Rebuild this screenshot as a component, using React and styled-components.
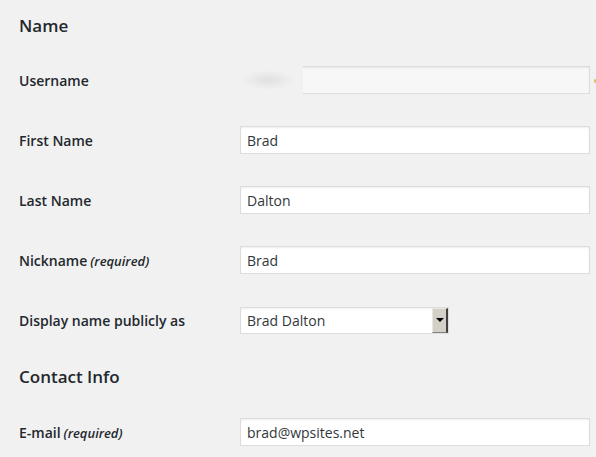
import React from 'react';
import styled, { createGlobalStyle } from 'styled-components';

const GlobalStyle = createGlobalStyle`
  html, body {
    margin: 0;
    padding: 0;
    background: #f1f1f1;
  }
  body {
    font-family: "Open Sans", "Liberation Sans", sans-serif;
    color: #23282d;
    font-size: 14px;
  }
`;

const Page = styled.div`
  width: 596px;
  height: 457px;
  overflow: hidden;
  padding-left: 19px;
  box-sizing: border-box;
`;

const Heading = styled.h2`
  margin: 0;
  height: ${p => p.h}px;
  display: flex;
  align-items: center;
  font-size: 17px;
  font-weight: 600;
  color: #23282d;
`;

const Row = styled.div`
  display: grid;
  grid-template-columns: 221px 350px;
  align-items: center;
  height: 60px;
`;

const Label = styled.label`
  font-size: 14px;
  font-weight: 600;
  color: #23282d;
`;

const Note = styled.span`
  font-size: 13px;
  font-style: italic;
  margin-left: 3px;
`;

const Field = styled.div`
  position: relative;
  height: 28px;
`;

const Input = styled.input`
  width: 350px;
  height: 28px;
  box-sizing: border-box;
  margin: 0;
  padding: 3px 6px;
  border: 1px solid #ddd;
  background: ${p => (p.disabled ? '#f7f7f7' : '#fff')};
  box-shadow: inset 0 1px 2px rgba(0, 0, 0, 0.07);
  font-family: "Open Sans", "Liberation Sans", sans-serif;
  font-size: 14px;
  color: #32373c;
  outline: none;
`;

const Blur = styled.div`
  position: absolute;
  left: -2px;
  top: -6px;
  width: 65px;
  height: 40px;
  background: radial-gradient(ellipse 26px 10px at 30px 20px, #e0e0e0 0%, #e8e8e8 45%, #f1f1f1 100%);
`;

const Dot = styled.div`
  position: absolute;
  right: -8px;
  top: 13px;
  width: 4px;
  height: 4px;
  border-radius: 50%;
  background: #e5b94a;
`;

const Select = styled.div`
  width: 209px;
  height: 27px;
  box-sizing: border-box;
  border: 1px solid #ddd;
  background: #fff;
  box-shadow: inset 0 1px 2px rgba(0, 0, 0, 0.07);
  display: flex;
  align-items: stretch;
`;

const SelectText = styled.div`
  flex: 1;
  display: flex;
  align-items: center;
  padding-left: 6px;
  font-size: 14px;
  color: #32373c;
`;

const SelectButton = styled.div`
  width: 16px;
  box-sizing: border-box;
  background: #d4d0c8;
  border-top: 1px solid #e8e6e1;
  border-left: 1px solid #e8e6e1;
  border-right: 2px solid #404040;
  border-bottom: 1px solid #808080;
  display: flex;
  align-items: center;
  justify-content: center;
`;

const Arrow = styled.div`
  width: 0;
  height: 0;
  border-left: 4px solid transparent;
  border-right: 4px solid transparent;
  border-top: 4px solid #000;
`;

export default function App() {
  return (
    <Page>
      <GlobalStyle />
      <Heading h={50}>Name</Heading>
      <Row>
        <Label>Username</Label>
        <Field>
          <Input disabled defaultValue="" />
          <Blur />
          <Dot />
        </Field>
      </Row>
      <Row>
        <Label>First Name</Label>
        <Field><Input defaultValue="Brad" /></Field>
      </Row>
      <Row>
        <Label>Last Name</Label>
        <Field><Input defaultValue="Dalton" /></Field>
      </Row>
      <Row>
        <Label>Nickname<Note>(required)</Note></Label>
        <Field><Input defaultValue="Brad" /></Field>
      </Row>
      <Row>
        <Label>Display name publicly as</Label>
        <Select>
          <SelectText>Brad Dalton</SelectText>
          <SelectButton><Arrow /></SelectButton>
        </Select>
      </Row>
      <Heading h={52}>Contact Info</Heading>
      <Row>
        <Label>E-mail<Note>(required)</Note></Label>
        <Field><Input defaultValue="brad@wpsites.net" /></Field>
      </Row>
    </Page>
  );
}
